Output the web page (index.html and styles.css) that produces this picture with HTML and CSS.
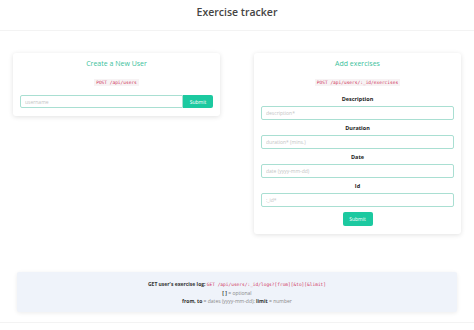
FILE: index.html
```html
<!DOCTYPE html>
<html lang="en">
<head>
  <meta charset="UTF-8" />
  <title>Exercise tracker</title>
  <link rel="stylesheet" href="styles.css">
</head>
<body>
  <header class="top">
    <h1>Exercise tracker</h1>
  </header>

  <main class="cards">
    <div class="card">
      <h2>Create a New User</h2>
      <div class="route"><code>POST /api/users</code></div>
      <form class="inline-form">
        <input type="text" placeholder="username" />
        <button type="button">Submit</button>
      </form>
    </div>

    <div class="card">
      <h2>Add exercises</h2>
      <div class="route"><code>POST /api/users/:_id/exercises</code></div>
      <form class="stack-form">
        <label>Description</label>
        <input type="text" placeholder="description*" />
        <label>Duration</label>
        <input type="text" placeholder="duration* (mins.)" />
        <label>Date</label>
        <input type="text" placeholder="date (yyyy-mm-dd)" />
        <label>Id</label>
        <input type="text" placeholder=":_id*" />
        <button type="button">Submit</button>
      </form>
    </div>
  </main>

  <section class="notes">
    <div class="notes-box">
      <p><b>GET user's exercise log:</b> <code>GET /api/users/:_id/logs?[from][&amp;to][&amp;limit]</code></p>
      <p><b>[ ]</b> = optional</p>
      <p><b>from, to</b> = dates (yyyy-mm-dd); <b>limit</b> = number</p>
    </div>
  </section>

  <footer class="bottom"></footer>
</body>
</html>
```

FILE: styles.css
```css
body {
  margin: 0;
  background: #fff;
  color: #4a4a4a;
  font-family: 'Open Sans', 'Liberation Sans', sans-serif;
}
.top {
  height: 30px;
  border-bottom: 1px solid #f3f3f3;
  text-align: center;
}
.top h1 {
  margin: 0;
  padding-top: 4px;
  font-size: 10.5px;
  line-height: 16px;
  font-weight: 600;
  color: #444;
}
.cards {
  display: grid;
  grid-template-columns: 1fr 1fr;
  gap: 34px;
  padding: 22px 13px 0;
  align-items: start;
}
.card {
  background: #fff;
  border-radius: 3px;
  box-shadow: 0 1px 5px rgba(0, 0, 0, 0.12);
  padding: 5px 7px 8px;
  text-align: center;
}
.card h2 {
  margin: 0;
  font-size: 7px;
  line-height: 12px;
  font-weight: 400;
  color: #3cbf9c;
}
.route {
  margin-top: 8px;
  font-size: 5px;
  line-height: 8px;
}
code {
  font-family: 'DejaVu Sans Mono', 'Liberation Mono', monospace;
  font-size: 4.5px;
  color: #d0345a;
  background: #f7f3f4;
  padding: 1px 2px;
}
input {
  box-sizing: border-box;
  width: 100%;
  height: 14px;
  margin: 0;
  padding: 0 4px;
  border: 1px solid #a9dfd2;
  border-radius: 2px;
  font-family: inherit;
  font-size: 5px;
  color: #444;
  outline: none;
}
input::placeholder {
  color: #c4c4c4;
}
button {
  height: 14px;
  padding: 0 6px;
  border: none;
  border-radius: 2px;
  background: #1cc9a0;
  color: #fff;
  font-family: inherit;
  font-size: 5px;
}
.inline-form {
  display: flex;
  margin-top: 8px;
}
.inline-form input {
  height: 13px;
  border-radius: 2px 0 0 2px;
}
.inline-form button {
  height: 13px;
  width: 30px;
  flex: none;
  border-radius: 0 2px 2px 0;
}
.stack-form {
  display: flex;
  flex-direction: column;
  align-items: center;
  margin-top: 4px;
}
.stack-form label {
  margin-top: 3px;
  font-size: 5.5px;
  line-height: 10px;
  font-weight: 700;
  color: #222;
}
.stack-form input {
  margin-top: 2px;
}
.stack-form button {
  margin-top: 5px;
  width: 30px;
  padding: 0;
}
.notes {
  padding: 38px 17px 0;
}
.notes-box {
  background: #eff3fa;
  border-radius: 2px;
  box-shadow: 0 1px 4px rgba(0, 0, 0, 0.08);
  padding: 8px 10px 7px;
  text-align: center;
}
.notes-box p {
  margin: 0;
  font-size: 5px;
  line-height: 8px;
  color: #888;
}
.notes-box b {
  color: #333;
}
.notes-box code {
  background: none;
  padding: 0;
}
.bottom {
  margin-top: 10px;
  border-top: 1px solid #f3f3f3;
  height: 10px;
}
```
